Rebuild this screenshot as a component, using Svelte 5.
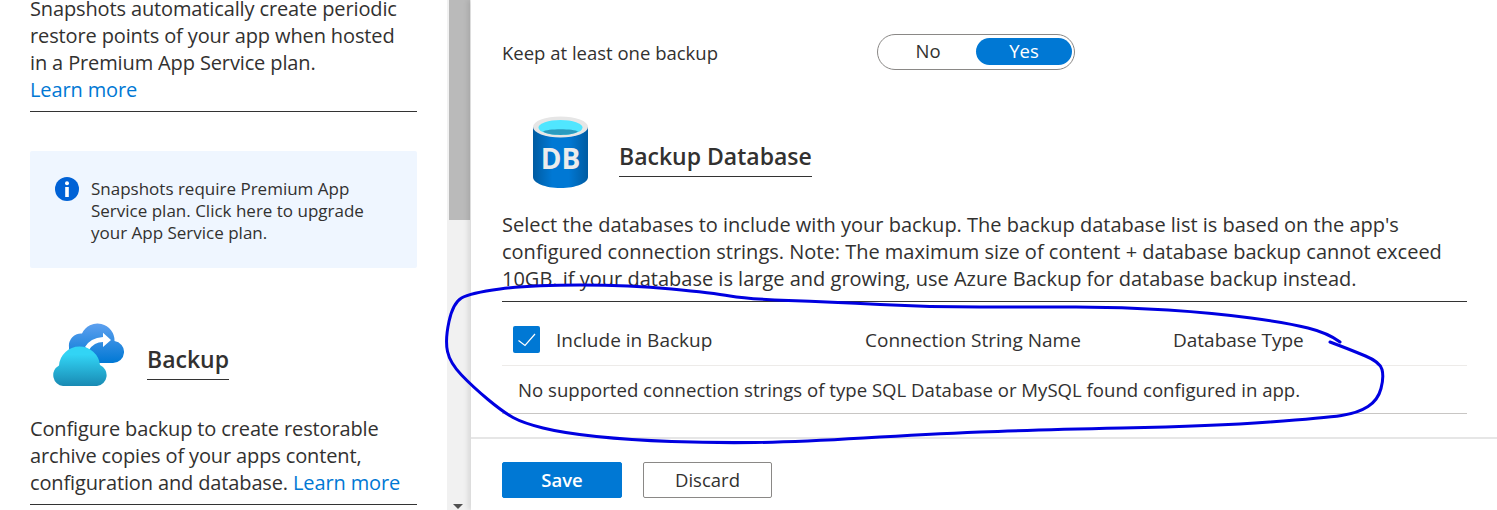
<script>
  // hand-drawn annotation over the table, page coordinates
  const scribble = [
    [1340, 342], [1328, 333], [1288, 323], [1214, 313], [1122, 307], [1030, 307], [930, 307], [830, 302],
    [747, 299], [713, 293], [630, 285], [530, 285], [470, 293], [453, 303], [445, 340], [450, 363],
    [473, 387], [503, 412], [523, 423], [563, 433], [630, 440], [713, 443], [797, 442], [930, 434],
    [1030, 430], [1214, 426], [1325, 418], [1358, 413], [1378, 400], [1384, 377], [1380, 362], [1351, 350], [1330, 342],
  ]

  function smooth(points) {
    let d = `M${points[0][0]} ${points[0][1]}`
    for (let i = 1; i < points.length - 1; i++) {
      const [x, y] = points[i]
      const [nx, ny] = points[i + 1]
      d += ` Q${x} ${y} ${(x + nx) / 2} ${(y + ny) / 2}`
    }
    const last = points[points.length - 1]
    return d + ` L${last[0]} ${last[1]}`
  }

  const columns = ["Include in Backup", "Connection String Name", "Database Type"]
</script>

<div class="page">
  <aside class="side">
    <p class="copy first">
      Snapshots automatically create periodic restore points of your app when hosted in a Premium App Service plan.
      <br /><a href="#snapshots">Learn more</a>
    </p>

    <div class="info">
      <svg class="info-icon" viewBox="0 0 24 24" aria-hidden="true">
        <circle cx="12" cy="12" r="12" fill="#0062d6" />
        <circle cx="12" cy="6.2" r="2" fill="#fff" />
        <rect x="10.2" y="10" width="3.6" height="10" fill="#fff" />
      </svg>
      <span>Snapshots require Premium App Service plan. Click here to upgrade your App Service plan.</span>
    </div>

    <div class="backup-head">
      <svg class="cloud" viewBox="0 0 72 64" aria-hidden="true">
        <defs>
          <linearGradient id="cloudBack" x1="0" y1="0" x2="0" y2="1">
            <stop offset="0" stop-color="#5ea0ef" />
            <stop offset="1" stop-color="#0078d4" />
          </linearGradient>
          <linearGradient id="cloudFront" x1="0" y1="0" x2="0" y2="1">
            <stop offset="0.2" stop-color="#32d4f5" />
            <stop offset="1" stop-color="#198ab3" />
          </linearGradient>
        </defs>
        <path d="M28 40H61A11 11 0 0 0 62.500 18.100A17 17 0 0 0 30 10.500A12 12 0 0 0 17 24V40Z" fill="url(#cloudBack)" />
        <path d="M33 24Q38 15 51 14V9.700L59 17L51 24V19Q42 19 37 27Z" fill="#fff" />
        <path d="M11 63A11 11 0 0 1 7 42.400A20.600 20.600 0 0 1 48 42A11 11 0 0 1 45 63Z" fill="url(#cloudFront)" />
      </svg>
      <h2>Backup</h2>
    </div>

    <p class="copy">
      Configure backup to create restorable archive copies of your apps content, configuration and database.
      <a href="#backup">Learn more</a>
    </p>
  </aside>

  <div class="scrollbar">
    <div class="thumb"></div>
    <div class="arrow"></div>
  </div>

  <main class="main">
    <div class="keep">
      <span>Keep at least one backup</span>
      <div class="toggle">
        <button type="button">No</button>
        <button type="button" class="on">Yes</button>
      </div>
    </div>

    <div class="db-head">
      <svg class="db" viewBox="0 0 55 72" aria-hidden="true">
        <defs>
          <linearGradient id="dbBody" x1="0" y1="0" x2="1" y2="0">
            <stop offset="0" stop-color="#005ba1" />
            <stop offset="0.35" stop-color="#0078d4" />
            <stop offset="0.65" stop-color="#0078d4" />
            <stop offset="1" stop-color="#005ba1" />
          </linearGradient>
        </defs>
        <path d="M0 11V61C0 67 12 72 27.500 72S55 67 55 61V11Z" fill="url(#dbBody)" />
        <ellipse cx="27.500" cy="11" rx="27.500" ry="10.500" fill="#e6e6e6" />
        <ellipse cx="27.500" cy="11.500" rx="22" ry="7.500" fill="#50e6ff" />
        <path d="M10 15.500C14 12.500 41 12.500 45 15.500C40 20 15 20 10 15.500Z" fill="#2a9bbf" />
        <text x="27.500" y="53" class="db-text" text-anchor="middle">DB</text>
      </svg>
      <h2>Backup Database</h2>
    </div>

    <p class="copy wide">
      Select the databases to include with your backup. The backup database list is based on the app's configured connection strings. Note: The maximum size of content + database backup cannot exceed 10GB. if your database is large and growing, use Azure Backup for database backup instead.
    </p>

    <div class="table">
      <div class="thead">
        <div class="col first-col">
          <span class="check">
            <svg viewBox="0 0 27 27" aria-hidden="true"><path d="M5.500 14.500L12 19.500L22 8" fill="none" stroke="#fff" stroke-width="1.200" /></svg>
          </span>
          {columns[0]}
        </div>
        <div class="col">{columns[1]}</div>
        <div class="col">{columns[2]}</div>
      </div>
      <div class="empty">No supported connection strings of type SQL Database or MySQL found configured in app.</div>
    </div>

    <div class="footer">
      <button type="button" class="btn primary">Save</button>
      <button type="button" class="btn">Discard</button>
    </div>
  </main>

  <svg class="scribble" viewBox="0 0 1497 510" aria-hidden="true">
    <path d={smooth(scribble)} fill="none" stroke="#0000e0" stroke-width="3" stroke-linecap="round" stroke-linejoin="round" />
  </svg>
</div>

<style>
  :global(body) {
    margin: 0;
    background: #fff;
  }

  .page {
    position: relative;
    display: grid;
    grid-template-columns: 447px 25px 1fr;
    width: 1497px;
    height: 510px;
    overflow: hidden;
    font-family: "Open Sans", "Noto Sans", sans-serif;
    color: #323130;
  }

  .side {
    padding: 0 30px;
    min-width: 0;
  }

  .copy {
    box-sizing: border-box;
    margin: 0;
    width: 387px;
    font-size: 20px;
    letter-spacing: -0.13px;
    line-height: 27px;
    padding: 0 6px 8px 0;
    border-bottom: 1px solid #333;
  }

  .copy.first {
    margin-top: -5px;
  }

  .copy a {
    color: #0078d4;
    text-decoration: none;
  }

  .info {
    display: flex;
    gap: 12px;
    box-sizing: border-box;
    height: 117px;
    margin-top: 39px;
    padding: 26px 40px 0 25px;
    background: #eff6ff;
    border-radius: 2px;
    font-size: 17px;
    line-height: 22px;
  }

  .info span {
    padding-top: 1px;
  }

  .info-icon {
    flex: none;
    width: 24px;
    height: 24px;
  }

  .backup-head {
    display: flex;
    height: 64px;
    margin: 55px 0 28px 22px;
  }

  .cloud {
    flex: none;
    width: 72px;
    height: 64px;
  }

  h2 {
    margin: 0;
    font-size: 23px;
    font-weight: 600;
    line-height: 32px;
    padding-bottom: 4px;
    border-bottom: 1px solid #333;
    align-self: flex-start;
  }

  .backup-head h2 {
    margin: 20px 0 0 23px;
  }

  .scrollbar {
    position: relative;
    background: #f1f1f1;
  }

  .thumb {
    width: 21px;
    height: 220px;
    margin-left: 2px;
    background: #bababa;
  }

  .arrow {
    position: absolute;
    left: 6px;
    bottom: 1px;
    border-left: 5px solid transparent;
    border-right: 5px solid transparent;
    border-top: 5px solid #505050;
  }

  .main {
    position: relative;
    display: flex;
    flex-direction: column;
    margin-left: -1px;
    padding: 34px 30px 0 31px;
    background: #fff;
    box-shadow: -3px 0 5px rgba(0, 0, 0, 0.1);
  }

  .keep {
    display: flex;
    align-items: center;
    gap: 159px;
    font-size: 18.5px;
  }

  .keep span {
    width: 216px;
  }

  .toggle {
    display: flex;
    box-sizing: border-box;
    width: 198px;
    height: 36px;
    padding: 3px 2px 4px;
    border: 1px solid #8a8886;
    border-radius: 18px;
  }

  .toggle button {
    width: 96px;
    padding: 0 0 2px;
    border: 0;
    background: none;
    border-radius: 14px;
    font: inherit;
    color: #323130;
  }

  .toggle .on {
    background: #0078d4;
    color: #fff;
  }

  .db-head {
    display: flex;
    height: 72px;
    margin: 46px 0 23px 31px;
  }

  .db {
    flex: none;
    width: 55px;
    height: 72px;
  }

  .db-text {
    font-size: 28px;
    font-weight: 700;
    fill: #ececec;
  }

  .db-head h2 {
    margin: 24px 0 0 31px;
  }

  .copy.wide {
    width: 965px;
    letter-spacing: 0;
    padding: 0 0 9px;
  }

  .thead {
    display: grid;
    grid-template-columns: 352px 308px 1fr;
    align-items: center;
    box-sizing: border-box;
    height: 64px;
    padding: 12px 0 0 11px;
    border-bottom: 1px solid #edebe9;
    font-size: 19px;
    font-weight: 500;
  }

  .first-col {
    display: flex;
    align-items: center;
    gap: 16px;
  }

  .check {
    display: block;
    width: 27px;
    height: 27px;
    background: #0078d4;
    border-radius: 2px;
  }

  .check svg {
    display: block;
  }

  .empty {
    box-sizing: border-box;
    height: 48px;
    padding-left: 16px;
    border-bottom: 1px solid #c8c6c4;
    font-size: 18.6px;
    line-height: 47px;
  }

  .footer {
    display: flex;
    gap: 21px;
    margin: 23px -30px 0 -31px;
    padding: 23px 0 0 31px;
    border-top: 2px solid #e6e6e6;
  }

  .btn {
    box-sizing: border-box;
    width: 129px;
    height: 36px;
    padding: 0 0 2px;
    background: #fff;
    border: 1px solid #8a8886;
    border-radius: 2px;
    font: inherit;
    font-size: 18.5px;
    font-weight: 500;
    color: #323130;
  }

  .btn.primary {
    width: 120px;
    background: #0078d4;
    border-color: #0078d4;
    color: #fff;
    font-weight: 600;
  }

  .scribble {
    position: absolute;
    inset: 0;
    width: 1497px;
    height: 510px;
    pointer-events: none;
  }
</style>
